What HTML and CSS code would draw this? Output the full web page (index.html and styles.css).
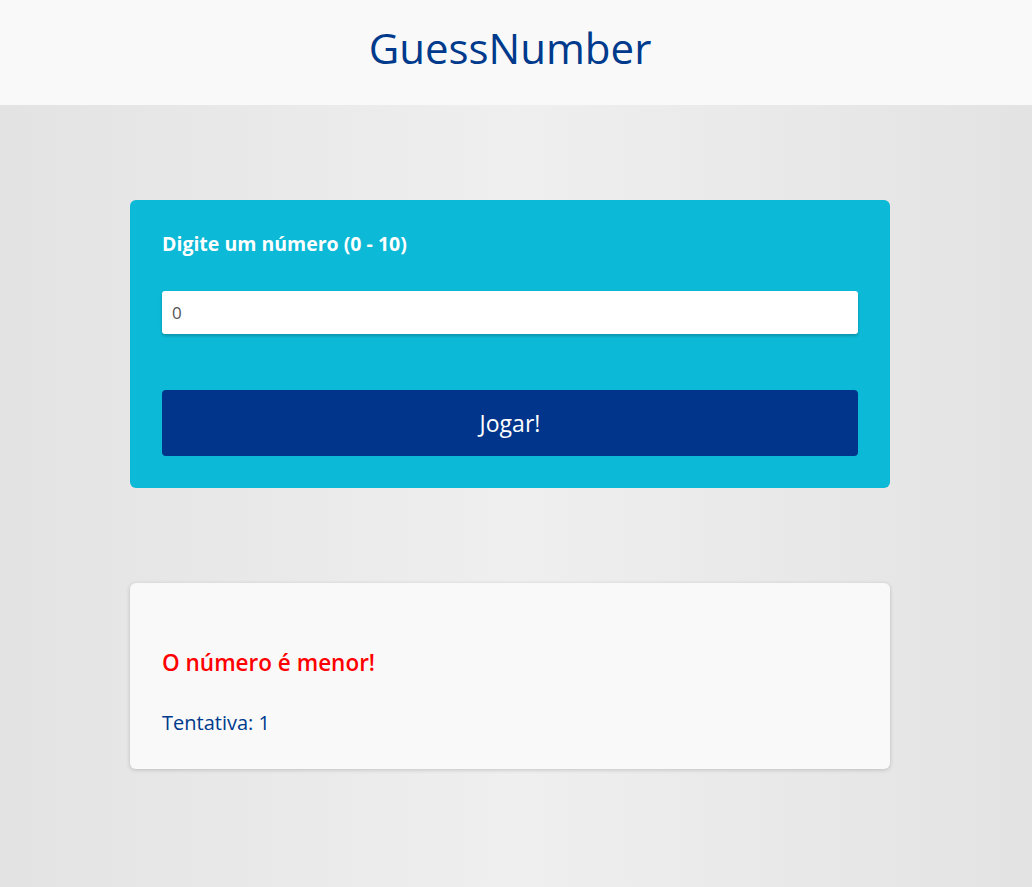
FILE: index.html
```html
<!DOCTYPE html>
<html lang="pt">
<head>
<meta charset="utf-8">
<title>GuessNumber</title>
<link rel="stylesheet" href="styles.css">
</head>
<body>
<header class="topbar">
  <h1 class="title">GuessNumber</h1>
</header>
<main class="content">
  <section class="card card-form">
    <label class="label" for="guess">Digite um número (0 - 10)</label>
    <input class="input" id="guess" type="text" value="0">
    <button class="btn" type="button">Jogar!</button>
  </section>
  <section class="card card-result">
    <p class="msg">O número é menor!</p>
    <p class="tries">Tentativa: 1</p>
  </section>
</main>
</body>
</html>
```
FILE: styles.css
```css
* { box-sizing: border-box; }
html, body { margin: 0; padding: 0; }
body {
  font-family: "Open Sans", "Noto Sans", sans-serif;
  min-height: 887px;
  background: linear-gradient(to right, #e3e3e3 0%, #efefef 50%, #e3e3e3 100%);
}
.topbar {
  height: 105px;
  background: #f9f9f9;
  display: flex;
  align-items: center;
  justify-content: center;
  padding-right: 12px;
  padding-bottom: 10px;
}
.title {
  margin: 0;
  font-weight: 400;
  font-size: 42px;
  color: #003a8c;
}
.content {
  width: 760px;
  margin-left: calc((100% - 772px) / 2);
  padding-top: 95px;
  display: flex;
  flex-direction: column;
  gap: 95px;
}
.card {
  border-radius: 6px;
  padding: 32px;
}
.card-form {
  background: #0cb9d6;
  display: flex;
  flex-direction: column;
}
.label {
  color: #fff;
  font-weight: 700;
  font-size: 19.5px;
  line-height: 24px;
}
.input {
  margin-top: 35px;
  height: 43px;
  border: none;
  border-radius: 3px;
  background: #fff;
  padding: 0 10px;
  font-family: inherit;
  font-size: 17px;
  color: #555;
  box-shadow: 0 2px 3px rgba(0,0,0,0.2);
}
.btn {
  margin-top: 56px;
  height: 66px;
  border: none;
  border-radius: 4px;
  background: #00358b;
  color: #fff;
  font-family: inherit;
  font-size: 23px;
}
.card-result {
  background: #f9f9f9;
  box-shadow: 0 1px 4px rgba(0,0,0,0.18);
  padding-top: 64px;
  padding-bottom: 32px;
}
.msg {
  margin: 0;
  color: #ff0000;
  font-size: 22.5px;
  font-weight: 600;
  line-height: 32px;
}
.tries {
  margin: 30px 0 0;
  color: #003a8c;
  font-size: 20px;
  line-height: 28px;
}
```
